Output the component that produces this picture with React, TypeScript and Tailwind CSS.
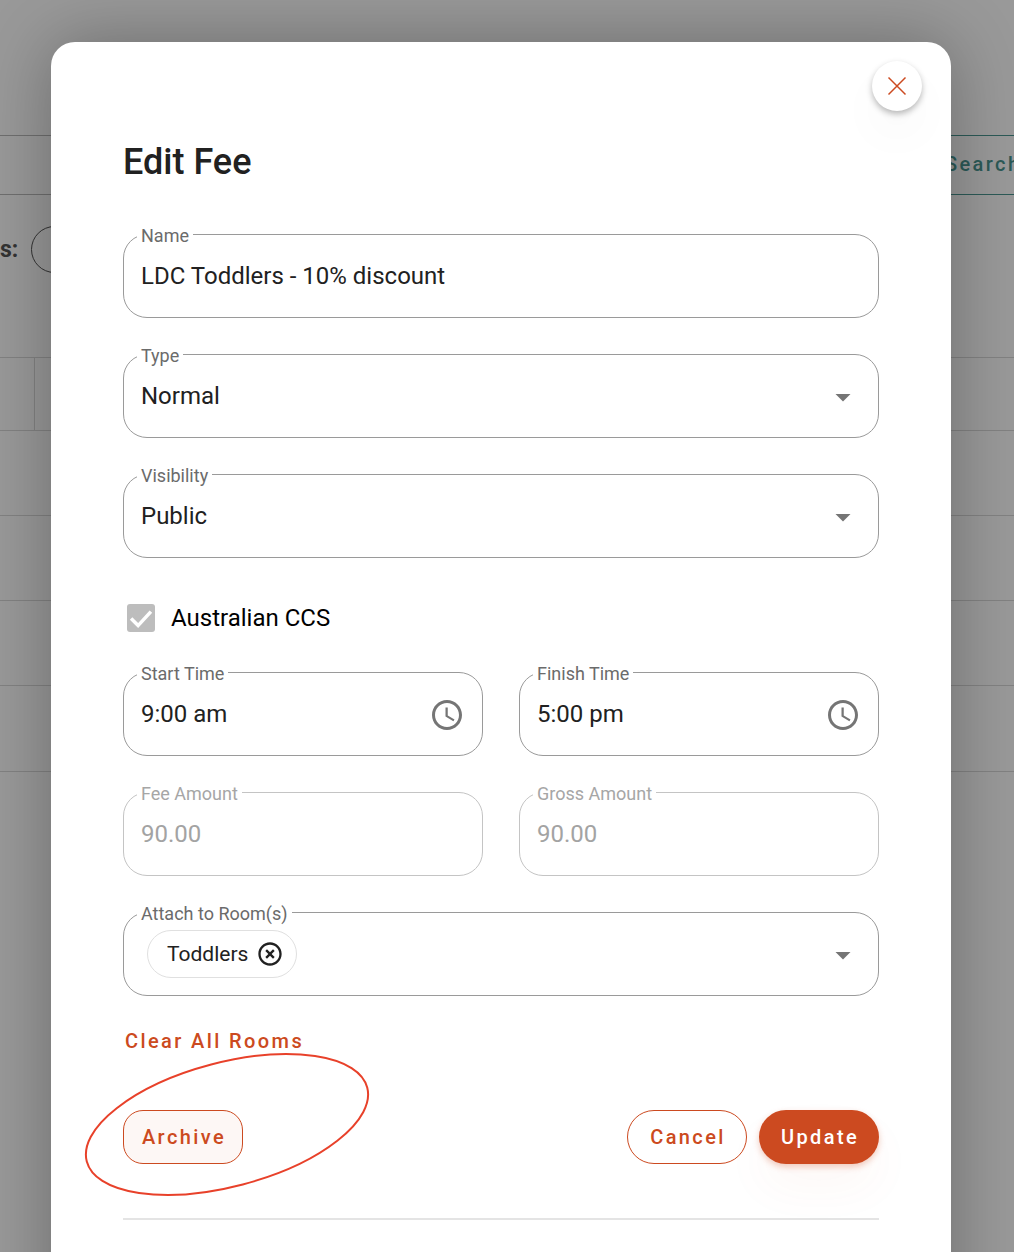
import React from "react";

const Caret = () => (
  <svg viewBox="0 0 24 24" className="w-9 h-9 fill-[#757575] shrink-0 mt-[1px]">
    <path d="M7 10l5 5 5-5z" />
  </svg>
);

const Clock = () => (
  <svg viewBox="0 0 24 24" className="w-9 h-9 fill-[#757575] shrink-0 mt-[1px]">
    <path d="M11.99 2C6.47 2 2 6.48 2 12s4.47 10 9.99 10C17.52 22 22 17.52 22 12S17.52 2 11.99 2zM12 20c-4.42 0-8-3.58-8-8s3.58-8 8-8 8 3.58 8 8-3.58 8-8 8z" />
    <path d="M12.5 7H11v6l5.25 3.15.75-1.23-4.5-2.67z" />
  </svg>
);

function Field({
  label,
  disabled,
  right,
  children,
}: {
  label: string;
  disabled?: boolean;
  right?: React.ReactNode;
  children: React.ReactNode;
}) {
  return (
    <div
      className={`relative h-[84px] rounded-[24px] border flex items-center ${
        disabled ? "border-[#c4c4c4]" : "border-[#9a9a9a]"
      }`}
    >
      <span
        className={`absolute left-[13px] -top-[10px] bg-white px-1 text-[18px] leading-[21px] ${
          disabled ? "text-[#a6a6a6]" : "text-[#6b6b6b]"
        }`}
      >
        {label}
      </span>
      <div className="flex-1 min-w-0 pl-[17px] flex items-center">{children}</div>
      {right}
    </div>
  );
}

const Value = ({ children, muted }: { children: React.ReactNode; muted?: boolean }) => (
  <span className={`text-[24px] leading-[28px] ${muted ? "text-[#a3a3a3]" : "text-[#212121]"}`}>{children}</span>
);

export default function App() {
  return (
    <div className="relative h-[1252px] overflow-hidden bg-[#999999] font-['Roboto',sans-serif]">
      {/* page behind the dialog */}
      <div className="h-[135px]" />
      <div className="h-[60px] border-y border-[#6f6f6f] flex items-center justify-end">
        <div className="w-[64px] h-[60px] -my-px border-y border-[#2c5a57] flex items-center overflow-hidden">
          <span className="text-[20px] font-medium tracking-[2.4px] leading-[24px] text-[#2c5a57] -ml-[5px] -mt-[2px] whitespace-nowrap">Search</span>
        </div>
      </div>
      <div className="h-[162px] flex items-start pt-[31px]">
        <span className="text-[23px] font-bold text-[#333333] w-[31px] mt-[7px] shrink-0 whitespace-nowrap">s:</span>
        <div className="w-[120px] h-[47px] rounded-full border border-[#333333]" />
      </div>
      <div className="h-[74px] border-y border-[#828282] flex">
        <div className="w-[35px] border-r border-[#828282]" />
      </div>
      <div className="h-[85px] border-b border-[#828282]" />
      <div className="h-[85px] border-b border-[#828282]" />
      <div className="h-[85px] border-b border-[#828282]" />
      <div className="h-[86px] border-b border-[#828282]" />

      {/* dialog */}
      <div className="absolute left-[51px] top-[42px] w-[900px] h-[1300px] bg-white rounded-[24px] shadow-[0_0_70px_rgba(0,0,0,0.3)] px-[72px] pt-[99px]">
        <button className="absolute right-[29.5px] top-[19px] w-[50px] h-[50px] rounded-full bg-white flex items-center justify-center shadow-[0_3px_6px_rgba(0,0,0,0.28),0_24px_48px_rgba(0,0,0,0.03)]">
          <svg viewBox="0 0 20 20" className="w-5 h-5 stroke-[#cc4a20] fill-none" strokeWidth="1.5">
            <path d="M1.5 1.5l17 17M18.5 1.5l-17 17" />
          </svg>
        </button>

        <h1 className="text-[36px] leading-[42px] font-medium text-[#212121]">Edit Fee</h1>

        <div className="mt-[51px] flex flex-col gap-9">
          <Field label="Name">
            <Value>LDC Toddlers - 10% discount</Value>
          </Field>
          <Field label="Type" right={<div className="pr-[17px]"><Caret /></div>}>
            <Value>Normal</Value>
          </Field>
          <Field label="Visibility" right={<div className="pr-[17px]"><Caret /></div>}>
            <Value>Public</Value>
          </Field>
        </div>

        <div className="mt-[46px] h-[28px] flex items-center pl-1 gap-4">
          <span className="w-[28px] h-[28px] rounded-[3px] bg-[#bdbdbd] flex items-center justify-center">
            <svg viewBox="0 0 24 24" className="w-[28px] h-[28px] fill-none stroke-white" strokeWidth="3">
              <path d="M3.5 12.5l6 6 11-12" />
            </svg>
          </span>
          <span className="text-[24px] text-black">Australian CCS</span>
        </div>

        <div className="mt-[40px] grid grid-cols-2 gap-x-9 gap-y-9">
          <Field label="Start Time" right={<div className="pr-[17px]"><Clock /></div>}>
            <Value>9:00 am</Value>
          </Field>
          <Field label="Finish Time" right={<div className="pr-[17px]"><Clock /></div>}>
            <Value>5:00 pm</Value>
          </Field>
          <Field label="Fee Amount" disabled>
            <Value muted>90.00</Value>
          </Field>
          <Field label="Gross Amount" disabled>
            <Value muted>90.00</Value>
          </Field>
        </div>

        <div className="mt-9">
          <Field label="Attach to Room(s)" right={<div className="pr-[17px]"><Caret /></div>}>
            <div className="ml-[6px] h-[48px] w-[150px] rounded-full border border-[#e0e0e0] flex items-center pl-[19px] gap-[8px] text-[#212121]">
              <span className="text-[21px] leading-[28px]">Toddlers</span>
              <svg viewBox="0 0 24 24" className="w-7 h-7 fill-[#212121] shrink-0">
                <path d="M14.59 8 12 10.59 9.41 8 8 9.41 10.59 12 8 14.59 9.41 16 12 13.41 14.59 16 16 14.59 13.41 12 16 9.41 14.59 8zM12 2C6.47 2 2 6.47 2 12s4.47 10 10 10 10-4.47 10-10S17.53 2 12 2zm0 18c-4.41 0-8-3.59-8-8s3.59-8 8-8 8 3.59 8 8-3.59 8-8 8z" />
              </svg>
            </div>
          </Field>
        </div>

        <div className="mt-[31px] pl-[2px] text-[20px] leading-[28px] font-medium tracking-[2.4px] text-[#cc4a20]">Clear All Rooms</div>

        <div className="mt-[55px] flex items-center">
          <button className="w-[120px] h-[54px] pl-[2px] rounded-[20px] border border-[#cc4a20] bg-[#fdf7f5] text-[20px] font-medium tracking-[2.4px] text-[#cc4a20]">Archive</button>
          <button className="ml-auto w-[120px] h-[54px] pl-[2px] rounded-[27px] border border-[#cc4a20] bg-white text-[20px] font-medium tracking-[2.4px] text-[#cc4a20]">Cancel</button>
          <button className="ml-3 w-[120px] h-[54px] pl-[2px] rounded-[27px] bg-[#cc4a20] text-[20px] font-medium tracking-[2.4px] text-white shadow-[0_3px_6px_rgba(204,74,32,0.28),0_24px_48px_rgba(204,74,32,0.04)]">Update</button>
        </div>

        <div className="mt-[54px] h-[2px] bg-[#e4e4e4]" />
      </div>

      {/* hand-drawn annotation */}
      <svg className="absolute left-[70px] top-[1040px] w-[320px] h-[170px] pointer-events-none" viewBox="70 1040 320 170">
        <ellipse cx="227" cy="1124.5" rx="145" ry="62" transform="rotate(-14.75 227 1124.5)" fill="none" stroke="#e8412a" strokeWidth="2" />
      </svg>
    </div>
  );
}
